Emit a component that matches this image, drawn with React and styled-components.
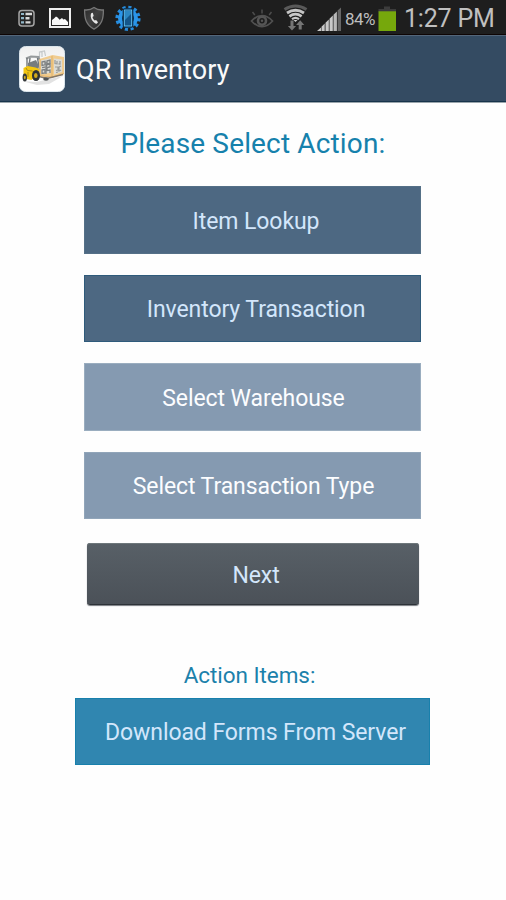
import React from "react"
import styled, { createGlobalStyle } from "styled-components"

const GlobalStyle = createGlobalStyle`
  body {
    margin: 0;
    background: #fefefe;
    font-family: Roboto, "Liberation Sans", sans-serif;
  }
`

const Screen = styled.div`
  width: 506px;
  height: 900px;
  overflow: hidden;
`

const StatusBar = styled.div`
  display: flex;
  align-items: flex-start;
  justify-content: space-between;
  box-sizing: border-box;
  height: 35px;
  background: #1e1e1e;
  border-bottom: 1px solid #0e0504;
`

const StatusGroup = styled.div`
  display: flex;
  align-items: flex-start;
`

const StatusIcon = styled.svg`
  display: block;
  flex: none;
  width: ${props => props.$w}px;
  height: 34px;
  margin-left: ${props => props.$gap || 0}px;
`

const Percent = styled.span`
  width: 32px;
  margin-left: 3px;
  font-size: 17px;
  line-height: 38px;
  letter-spacing: -0.6px;
  white-space: nowrap;
  color: #bdbdbd;
`

const Clock = styled.span`
  width: 93px;
  margin: 0 9px 0 7px;
  font-size: 25px;
  line-height: 37px;
  letter-spacing: -0.2px;
  white-space: nowrap;
  color: #c0c0c0;
`

const ActionBar = styled.header`
  display: flex;
  align-items: center;
  box-sizing: border-box;
  height: 67px;
  padding: 1px 0 0 19px;
  background: #344b62;
  border-top: 1px solid #53667a;
  border-bottom: 1px solid #17344b;
  box-shadow: 0 1px 0 #9aa5ac;
`

const AppIcon = styled.svg`
  display: block;
  width: 46px;
  height: 46px;
`

const AppTitle = styled.h1`
  margin: 2px 0 0 11px;
  font-size: 27px;
  font-weight: 400;
  line-height: 32px;
  letter-spacing: 0.1px;
  color: #fafafa;
`

const Content = styled.main`
  display: flex;
  flex-direction: column;
  align-items: center;
  padding: 25px 1px 0 0;
`

const Heading = styled.h2`
  margin: 0 0 26px 1px;
  font-size: 28px;
  font-weight: 400;
  line-height: 34px;
  letter-spacing: 0.15px;
  color: #1681ac;
`

const Actions = styled.div`
  display: flex;
  flex-direction: column;
  gap: 21px;
  margin-top: -1px;
`

const Button = styled.button`
  display: block;
  box-sizing: border-box;
  width: ${props => props.$width || 337}px;
  height: 67.5px;
  padding: 3px 0 0 ${props => (props.$centered ? 2 : 7)}px;
  border: 1px solid ${props => props.$edge};
  border-radius: 0;
  background: ${props => props.$fill};
  font-family: inherit;
  font-size: 23px;
  letter-spacing: -0.08px;
  color: ${props => props.$color || "#d3e6fb"};
`

const NextButton = styled(Button)`
  height: 62px;
  margin: 24px 0 0 1px;
  padding-left: 6px;
  border: 0;
  border-bottom: 1px solid #2d3238;
  border-radius: 3px;
  background: linear-gradient(#586067, #4b5158);
  box-shadow: inset 0 1px 0 #6e777b, 0 1px 1px #777b80;
`

const DownloadButton = styled(Button)`
  padding: 2px 0 0 6px;
`

const Label = styled.h3`
  margin: 56px 6px 7.5px 0;
  font-size: 22.5px;
  font-weight: 400;
  line-height: 29px;
  letter-spacing: -0.05px;
  color: #1b81ab;
`

const ListIcon = () => (
  <StatusIcon $w={18} $gap={17} viewBox="17 0 18 34">
    <rect x="19" y="10.5" width="15" height="15.5" rx="3" fill="#252525" stroke="#a5a5a5" strokeWidth="1.5" />
    <path d="M21 14h3M21 18.2h3M21 22.4h3" stroke="#91b6c8" strokeWidth="2.2" />
    <path d="M25.5 14H32M25.5 18.2h4M25.5 22.4h5" stroke="#d8d8d8" strokeWidth="2.4" />
  </StatusIcon>
)

const PictureIcon = () => (
  <StatusIcon $w={22} $gap={14} viewBox="49 0 22 34">
    <rect x="50" y="9" width="20" height="18" fill="#252525" stroke="#eee" strokeWidth="2" />
    <path d="M52 25v-5l2-1.5 2-2 1.6 1 2 2.2L62 18l1.4 1.5L65 19l3 3v3z" fill="#f8f8f8" />
  </StatusIcon>
)

const ShieldIcon = () => (
  <StatusIcon $w={22} $gap={12} viewBox="83 0 22 34">
    <defs>
      <linearGradient id="shield" x1="0" y1="0" x2="1" y2="1">
        <stop offset="0" stopColor="#292929" />
        <stop offset="0.45" stopColor="#414141" />
        <stop offset="1" stopColor="#282828" />
      </linearGradient>
    </defs>
    <path
      d="M94 7.5c-3 2.2-6 2.8-9.4 2.4 0 9 1.4 15 9.4 19.2 8-4.2 9.4-10.2 9.4-19.2-3.4.4-6.4-.2-9.4-2.4z"
      fill="url(#shield)"
      stroke="#777"
      strokeWidth="1.3"
    />
    <path
      d="M91.2 13.2l1.6-.4.9 3.2-1.2 1c.3 1.5 1 2.5 2.2 3.5l1.4-.5 1.9 2.2-1.2 1.5c-3.7-.3-7.5-6.5-5.6-10.5z"
      fill="#e8e8e8"
    />
  </StatusIcon>
)

const GearIcon = () => (
  <StatusIcon $w={28} $gap={9} viewBox="114 0 28 34">
    <circle cx="128" cy="18.3" r="10.8" fill="none" stroke="#268de0" strokeWidth="3.6" strokeDasharray="3 2.655" />
    <circle cx="128" cy="18.3" r="8" fill="#0b3658" stroke="#2b96ea" strokeWidth="4" />
    <rect x="123.5" y="9" width="9" height="18" rx="1" fill="#0d3e68" stroke="#062542" strokeWidth="1.6" />
    <rect x="124.3" y="10" width="7.4" height="16" fill="#14568b" stroke="#64c5f6" strokeWidth="0.9" />
    <path d="M125 11h6v3l-6 6z" fill="#2b87c4" />
  </StatusIcon>
)

const EyeIcon = () => (
  <StatusIcon $w={24} viewBox="250 0 24 34">
    <path
      d="M251.5 21q4.8-5.3 10.5-5.3t10.5 5.3q-4.8 5.6-10.5 5.6T251.5 21z"
      fill="none"
      stroke="#515151"
      strokeWidth="1.7"
    />
    <circle cx="262" cy="20.7" r="4" fill="#1e1e1e" stroke="#555" strokeWidth="2.6" />
    <circle cx="262" cy="20.7" r="1.2" fill="#555" />
    <path d="M262 9.5v4M252.5 12l2.3 3M271.5 12l-2.3 3" stroke="#4c4c4c" strokeWidth="1.5" />
  </StatusIcon>
)

const WifiIcon = () => (
  <StatusIcon $w={26} $gap={9} viewBox="283 0 26 34">
    <g fill="none">
      <path d="M284.5 9.5Q295.5 2.5 306.5 9.5" stroke="#595959" strokeWidth="3" />
      <path d="M287 13Q295.5 7.5 304 13" stroke="#c4c4c4" strokeWidth="2.9" />
      <path d="M289.4 16.4Q295.5 12 301.6 16.4" stroke="#c8c8c8" strokeWidth="2.6" />
      <path d="M292 19.2Q295.5 16.5 299 19.2" stroke="#c8c8c8" strokeWidth="2.2" />
    </g>
    <path d="M293.5 20h4l-2 2z" fill="#c8c8c8" />
    <path
      d="M290.5 20.5h3V26h2.6l-4.1 4.6-4.1-4.600h2.600zM298.700 29.500h3v-4.600h2.600l-4.100-4.700-4.100 4.700h2.600z"
      fill="#757575"
    />
  </StatusIcon>
)

const SignalIcon = () => (
  <StatusIcon $w={25} $gap={8} viewBox="317 0 25 34">
    <path
      d="M317 31l4-3.5V31zM321.5 31v-4.2l3.2-3.2V31zM325.5 31v-8.2l3.3-3.3V31zM329.5 31V18.8l3.3-3.3V31z"
      fill="#c9c9c9"
    />
    <path d="M333.5 31V14.8l3.4-3.4V31z" fill="#b8b8b8" />
    <path d="M337.6 31V10.5l3.4-3V31z" fill="#666" />
  </StatusIcon>
)

const BatteryIcon = () => (
  <StatusIcon $w={19} $gap={1} viewBox="378 0 19 34">
    <path d="M378.5 9h5.5V6.5h6V9h6v3h-17.5z" fill="#3c3c3c" />
    <rect x="378.5" y="11.3" width="17.5" height="19.7" fill="#76a80c" />
  </StatusIcon>
)

// forklift carrying a crate with QR labels
const Forklift = () => (
  <AppIcon viewBox="0 0 46 46">
    <defs>
      <linearGradient id="tile" x1="0" y1="0" x2="0" y2="1">
        <stop offset="0" stopColor="#efefef" />
        <stop offset="0.6" stopColor="#fff" />
      </linearGradient>
    </defs>
    <rect x="0.5" y="0.5" width="45" height="45" rx="6" fill="url(#tile)" stroke="#dbe5eb" />
    <path d="M3 35l14 1 27-6-14 8-12 1z" fill="#e2e2e2" />
    <path d="M20.5 11V6l5-1 1 5M23 5v6" fill="none" stroke="#c4c8ca" strokeWidth="1.2" />
    <path d="M7 12.5l5-2 7.5.5 1 3" fill="none" stroke="#95999b" strokeWidth="2.2" />
    <path d="M8 12v9M11 12l-1 8M18.5 12l2 12" fill="none" stroke="#72777a" strokeWidth="1.4" />
    <path d="M9 17l8-3 3 6-1 3-10-1z" fill="#777c7e" />
    <path d="M4.5 22l4-2 8 1.5 4 1.5v4l-8 7-8-1.5z" fill="#f4c60f" />
    <path d="M7 22l1.5 2.5 5 .5M9 26v5" fill="none" stroke="#a98d16" />
    <path d="M20.5 13L33.500 9 45 11v17l-13 4-11.500-2z" fill="#f0cc90" />
    <path d="M22 14.500l10-2.500v15L22 28z" fill="#dadbd7" />
    <path d="M35 12.500l8 1v12.500l-8 2.500z" fill="#dcdcd6" />
    <g fill="none" stroke="#7d8182" strokeWidth="1.300">
      <path d="M23 16l3-.7v3.500l-3 .7zM28 15l3-.8v3l-3 .8zM23 24l3-.5v3.500l-3 .5z" />
      <path d="M23 21.700l4-.8 1-2M27 16v3l4-1v3l-3 .6v3l3-.5v3M27 22v6" />
    </g>
    <g fill="none" stroke="#999b98" strokeWidth="1.200">
      <path d="M36 14v3.500l2 .3V15M41 15v3l-1.500-.2M36 21h3v3l-2 .5M42 20l-2 1v4l2-1M37 26.500l2-.5" />
    </g>
    <path d="M21 13.500v16l11.500 1.500M45 27.500L33 31V10" fill="none" stroke="#e5b66d" strokeWidth="1.200" />
    <path d="M20 30.500l8 2 16-4" fill="none" stroke="#85796a" strokeWidth="1.300" />
    <ellipse cx="17" cy="29.500" rx="4" ry="5.500" fill="#2e3234" />
    <ellipse cx="16.800" cy="29.500" rx="1.800" ry="2.600" fill="#d1a91c" />
    <ellipse cx="5.800" cy="31.500" rx="2.200" ry="4" fill="#34383a" />
    <ellipse cx="5.800" cy="31.500" rx="0.900" ry="1.700" fill="#d4b128" />
    <ellipse cx="27" cy="33" rx="2.800" ry="1.800" fill="#505354" />
  </AppIcon>
)

const App = () => {
  return (
    <Screen>
      <GlobalStyle />
      <StatusBar>
        <StatusGroup>
          <ListIcon />
          <PictureIcon />
          <ShieldIcon />
          <GearIcon />
        </StatusGroup>
        <StatusGroup>
          <EyeIcon />
          <WifiIcon />
          <SignalIcon />
          <Percent>84%</Percent>
          <BatteryIcon />
          <Clock>1:27 PM</Clock>
        </StatusGroup>
      </StatusBar>
      <ActionBar>
        <Forklift />
        <AppTitle>QR Inventory</AppTitle>
      </ActionBar>
      <Content>
        <Heading>Please Select Action:</Heading>
        <Actions>
          <Button $fill="#4d6882" $edge="#557087">Item Lookup</Button>
          <Button $fill="#4d6882" $edge="#2f5b7b">Inventory Transaction</Button>
          <Button $centered $fill="#859ab1" $edge="#9aadbf" $color="#fcfdff">Select Warehouse</Button>
          <Button $centered $fill="#859ab1" $edge="#91a5b9" $color="#fcfdff">Select Transaction Type</Button>
        </Actions>
        <NextButton $width={332}>Next</NextButton>
        <Label>Action Items:</Label>
        <DownloadButton $width={355} $fill="#3086b0" $edge="#1880ac">Download Forms From Server</DownloadButton>
      </Content>
    </Screen>
  )
}

export default App
